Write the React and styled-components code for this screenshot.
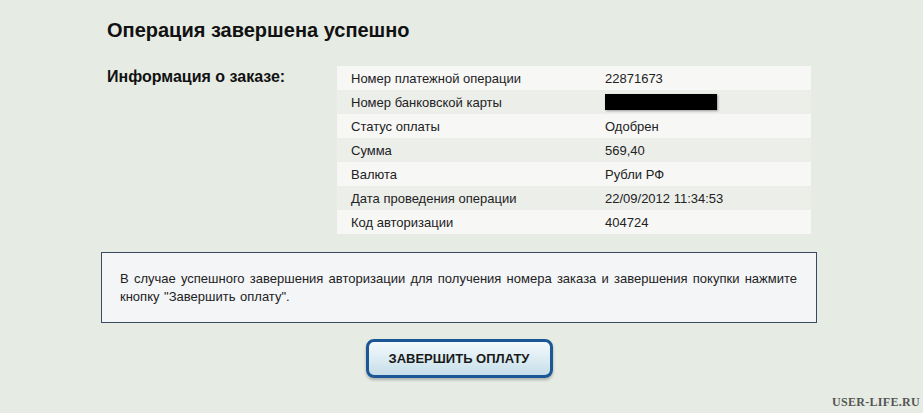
import React from 'react';
import styled, { createGlobalStyle } from 'styled-components';

const Global = createGlobalStyle`
  html, body {
    margin: 0;
    padding: 0;
    background: #e6ebe4;
  }
  body {
    font-family: "Liberation Sans", Arial, sans-serif;
    color: #1e1e1e;
  }
`;

const Page = styled.div`
  position: relative;
  width: 923px;
  height: 413px;
  overflow: hidden;
  background: #e6ebe4;
`;

const Content = styled.div`
  width: 716px;
  margin-left: 101px;
  padding-top: 18px;
`;

const Title = styled.h1`
  margin: 0 0 0 6px;
  font-size: 20px;
  font-weight: bold;
  color: #111;
  line-height: 24px;
`;

const InfoRow = styled.div`
  display: flex;
  margin-top: 24px;
`;

const Label = styled.div`
  width: 230px;
  padding-left: 6px;
  padding-top: 1px;
  font-size: 16px;
  font-weight: bold;
  color: #111;
  line-height: 20px;
`;

const Table = styled.div`
  width: 474px;
`;

const Row = styled.div`
  display: flex;
  height: 24px;
  align-items: center;
  font-size: 13px;
  color: #222;
  background: ${p => (p.$odd ? '#f7f7f6' : '#eceeea')};
`;

const Key = styled.div`
  width: 254px;
  padding-left: 14px;
`;

const Val = styled.div`
  flex: 1;
`;

const Hidden = styled.div`
  width: 112px;
  height: 16px;
  background: #000;
  box-shadow: 1px 1px 2px rgba(0, 0, 0, 0.35);
`;

const Notice = styled.div`
  margin-top: 18px;
  border: 1px solid #3b4b5f;
  background: #f4f5f7;
  padding: 17px 19px 16px 18px;
  font-size: 13px;
  line-height: 18px;
  color: #222;
  text-align: justify;
  word-spacing: 1px;
`;

const ButtonWrap = styled.div`
  display: flex;
  justify-content: center;
  margin-top: 16px;
`;

const FinishButton = styled.button`
  width: 187px;
  height: 39px;
  border: 3px solid #1c5795;
  border-radius: 8px;
  background: linear-gradient(to bottom, #f4f9fb 0%, #dfeef4 45%, #c6dde8 100%);
  box-shadow: 0 2px 3px rgba(0, 0, 0, 0.25);
  font-family: "Liberation Sans", Arial, sans-serif;
  font-size: 13px;
  font-weight: bold;
  color: #1a1a1a;
  cursor: pointer;
  outline: none;
`;

const Watermark = styled.div`
  position: absolute;
  right: 3px;
  bottom: 3px;
  font-family: "Liberation Serif", "DejaVu Serif", serif;
  font-weight: bold;
  font-size: 12px;
  color: #555;
  letter-spacing: 0.3px;
`;

const rows = [
  ['Номер платежной операции', '22871673'],
  ['Номер банковской карты', null],
  ['Статус оплаты', 'Одобрен'],
  ['Сумма', '569,40'],
  ['Валюта', 'Рубли РФ'],
  ['Дата проведения операции', '22/09/2012 11:34:53'],
  ['Код авторизации', '404724'],
];

export default function App() {
  return (
    <Page>
      <Global />
      <Content>
        <Title>Операция завершена успешно</Title>
        <InfoRow>
          <Label>Информация о заказе:</Label>
          <Table>
            {rows.map(([k, v], i) => (
              <Row key={k} $odd={i % 2 === 0}>
                <Key>{k}</Key>
                <Val>{v === null ? <Hidden /> : v}</Val>
              </Row>
            ))}
          </Table>
        </InfoRow>
        <Notice>
          В случае успешного завершения авторизации для получения номера заказа и завершения покупки нажмите
          кнопку "Завершить оплату".
        </Notice>
        <ButtonWrap>
          <FinishButton>ЗАВЕРШИТЬ ОПЛАТУ</FinishButton>
        </ButtonWrap>
      </Content>
      <Watermark>USER-LIFE.RU</Watermark>
    </Page>
  );
}
